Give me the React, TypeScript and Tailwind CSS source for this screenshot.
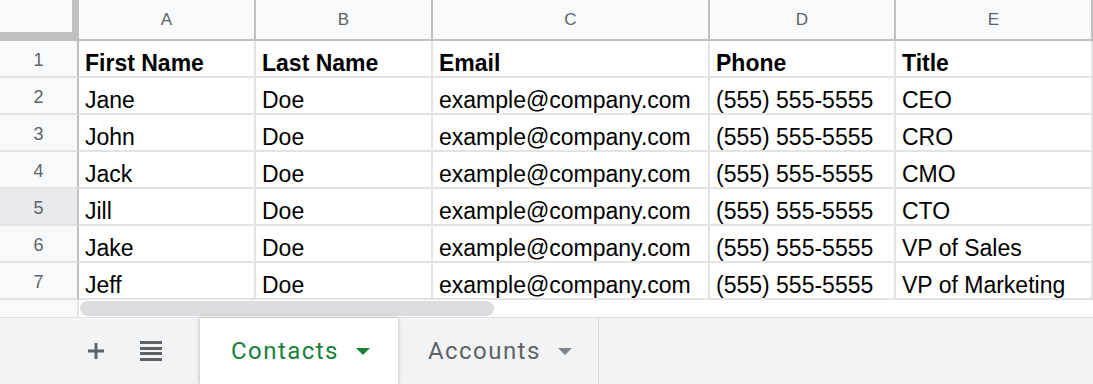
import { FC } from "react";

type Contact = { first: string; last: string; email: string; phone: string; title: string };

const contacts: Contact[] = [
  { first: "Jane", last: "Doe", email: "example@company.com", phone: "(555) 555-5555", title: "CEO" },
  { first: "John", last: "Doe", email: "example@company.com", phone: "(555) 555-5555", title: "CRO" },
  { first: "Jack", last: "Doe", email: "example@company.com", phone: "(555) 555-5555", title: "CMO" },
  { first: "Jill", last: "Doe", email: "example@company.com", phone: "(555) 555-5555", title: "CTO" },
  { first: "Jake", last: "Doe", email: "example@company.com", phone: "(555) 555-5555", title: "VP of Sales" },
  { first: "Jeff", last: "Doe", email: "example@company.com", phone: "(555) 555-5555", title: "VP of Marketing" },
];

const columns = ["A", "B", "C", "D", "E"];
const SELECTED_ROW = 5;

const Cell: FC<{ children?: React.ReactNode; bold?: boolean }> = ({ children, bold }) => (
  <div
    className={`h-[37px] border-r-2 border-b-2 border-[#e2e3e3] bg-white flex items-end pl-[6px] text-[23px] leading-[26px] text-black whitespace-nowrap overflow-hidden ${
      bold ? "font-bold" : ""
    }`}
  >
    {children}
  </div>
);

const RowHeader: FC<{ n: number }> = ({ n }) => (
  <div
    className={`h-[37px] border-r-2 border-b-2 border-r-[#c0c0c0] border-b-[#e2e3e3] flex items-center justify-center pt-[4px] text-[18px] text-[#5f6368] ${
      n === SELECTED_ROW ? "bg-[#e8eaed]" : "bg-[#f8f9fa]"
    }`}
  >
    {n}
  </div>
);

const Caret: FC<{ color: string }> = ({ color }) => (
  <svg width="14" height="7" viewBox="0 0 14 7" className="ml-[17px]">
    <path d="M0 0h14L7 7z" fill={color} />
  </svg>
);

const App: FC = () => {
  const rows: string[][] = [
    ["First Name", "Last Name", "Email", "Phone", "Title"],
    ...contacts.map((c) => [c.first, c.last, c.email, c.phone, c.title]),
  ];

  return (
    <div className="w-[1093px] h-[384px] overflow-hidden bg-white font-['Liberation_Sans',Arial,sans-serif]">
      <div className="grid grid-cols-[79px_177px_177px_277px_186px_197px]">
        {/* corner */}
        <div className="h-[41px] bg-[#c0c0c0]">
          <div className="w-[72px] h-[32px] bg-[#f8f9fa]" />
        </div>
        {columns.map((c) => (
          <div
            key={c}
            className="h-[41px] bg-[#f8f9fa] border-r-2 border-b-2 border-[#c0c0c0] flex items-center justify-center text-[17px] text-[#5f6368]"
          >
            {c}
          </div>
        ))}

        {rows.map((row, i) => (
          <div key={i} className="contents">
            <RowHeader n={i + 1} />
            {row.map((v, j) => (
              <Cell key={j} bold={i === 0}>
                {v}
              </Cell>
            ))}
          </div>
        ))}
      </div>

      {/* horizontal scroll */}
      <div className="flex h-[18px] border-b border-[#e0e0e0]">
        <div className="w-[79px] bg-[#f8f9fa] border-r-2 border-[#e2e3e3]" />
        <div className="pl-[1px] pt-[1px]">
          <div className="w-[414px] h-[15px] rounded-full bg-[#dadce0]" />
        </div>
      </div>

      {/* sheet tabs */}
      <div className="flex h-[66px] bg-[#f1f3f4] font-['Roboto',sans-serif]">
        <div className="flex items-center pl-[87px]">
          <svg width="18" height="18" viewBox="0 0 18 18">
            <path d="M9 1v16M1 9h16" stroke="#5f6368" strokeWidth="3" />
          </svg>
          <svg width="22" height="20" viewBox="0 0 22 20" className="ml-[35px]">
            <path d="M0 1.5h22M0 7.5h22M0 12.5h22M0 18.5h22" stroke="#5f6368" strokeWidth="3" />
          </svg>
        </div>
        <div className="relative z-10 ml-[38px] w-[198px] bg-white shadow-[0_0_4px_rgba(60,64,67,0.35)] flex items-center pl-[31px] text-[24px] tracking-[0.06em] text-[#188038]">
          Contacts
          <Caret color="#188038" />
        </div>
        <div className="w-[201px] border-r border-[#dadce0] flex items-center pl-[30px] text-[24px] tracking-[0.06em] text-[#5f6368]">
          Accounts
          <Caret color="#80868b" />
        </div>
      </div>
    </div>
  );
};

export default App;
